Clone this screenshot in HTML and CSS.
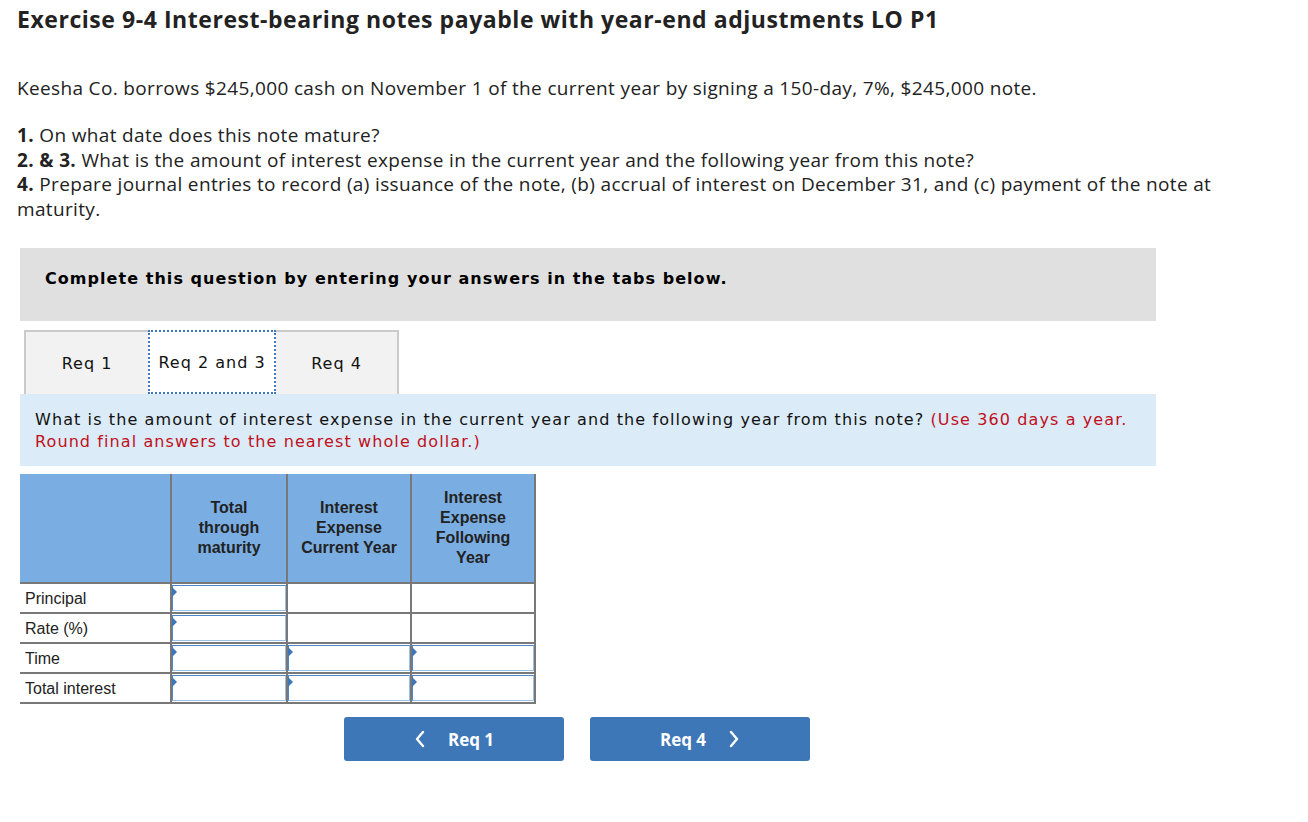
FILE: index.html
```html
<!DOCTYPE html>
<html>
<head>
<meta charset="utf-8">
<link rel="stylesheet" href="styles.css">
</head>
<body>
<div class="page">
  <h1 class="title">Exercise 9-4 Interest-bearing notes payable with year-end adjustments LO P1</h1>
  <p class="intro">Keesha Co. borrows $245,000 cash on November 1 of the current year by signing a 150-day, 7%, $245,000 note.</p>
  <div class="reqs">
    <div><b>1.</b> On what date does this note mature?</div>
    <div><b>2. &amp; 3.</b> What is the amount of interest expense in the current year and the following year from this note?</div>
    <div><b>4.</b> Prepare journal entries to record (a) issuance of the note, (b) accrual of interest on December 31, and (c) payment of the note at maturity.</div>
  </div>

  <div class="instruct">Complete this question by entering your answers in the tabs below.</div>

  <div class="tabs">
    <div class="tab">Req 1</div>
    <div class="tab active">Req 2 and 3</div>
    <div class="tab">Req 4</div>
  </div>

  <div class="question">What is the amount of interest expense in the current year and the following year from this note? <span class="hint">(Use 360 days a year.</span> <span class="hint">Round final answers to the nearest whole dollar.)</span></div>

  <table class="grid">
    <thead>
      <tr>
        <th class="blank"></th>
        <th class="c2">Total<br>through<br>maturity</th>
        <th class="c3">Interest<br>Expense<br>Current Year</th>
        <th class="c4">Interest<br>Expense<br>Following<br>Year</th>
      </tr>
    </thead>
    <tbody>
      <tr>
        <td class="label">Principal</td>
        <td class="in"><div class="box"></div></td>
        <td class="plain"></td>
        <td class="plain"></td>
      </tr>
      <tr>
        <td class="label">Rate (%)</td>
        <td class="in"><div class="box"></div></td>
        <td class="plain"></td>
        <td class="plain"></td>
      </tr>
      <tr>
        <td class="label">Time</td>
        <td class="in"><div class="box"></div></td>
        <td class="in"><div class="box"></div></td>
        <td class="in"><div class="box"></div></td>
      </tr>
      <tr>
        <td class="label">Total interest</td>
        <td class="in"><div class="box"></div></td>
        <td class="in"><div class="box"></div></td>
        <td class="in"><div class="box"></div></td>
      </tr>
    </tbody>
  </table>

  <div class="nav">
    <button class="btn"><svg class="chev" width="12" height="18" viewBox="0 0 12 18"><path d="M9 2 L3 9 L9 16" fill="none" stroke="#fff" stroke-width="2.4" stroke-linecap="round" stroke-linejoin="round"/></svg><span>Req 1</span></button>
    <button class="btn"><span>Req 4</span><svg class="chev" width="12" height="18" viewBox="0 0 12 18"><path d="M3 2 L9 9 L3 16" fill="none" stroke="#fff" stroke-width="2.4" stroke-linecap="round" stroke-linejoin="round"/></svg></button>
  </div>
</div>
</body>
</html>
```

FILE: styles.css
```css
* { box-sizing: border-box; }
body {
  margin: 0;
  background: #fff;
  color: #222;
  font-family: "Open Sans", "Lato", sans-serif;
}
.page {
  padding: 6px 17px 0 17px;
  width: 1308px;
}
.title {
  margin: 0;
  font-size: 23px;
  font-weight: 700;
  letter-spacing: 0.55px;
  line-height: 26px;
  color: #222;
}
.intro {
  margin: 44px 0 0 0;
  font-size: 19px;
  letter-spacing: 0.35px;
  line-height: 24px;
}
.reqs {
  margin-top: 23px;
  font-size: 19px;
  letter-spacing: 0.35px;
  line-height: 24.5px;
  width: 1250px;
}
.reqs b { font-weight: 700; }

.instruct {
  margin: 27px 0 0 3px;
  width: 1136px;
  height: 73px;
  background: #e0e0e0;
  padding: 21px 0 0 25px;
  font-family: "DejaVu Sans", Verdana, sans-serif;
  font-weight: 700;
  font-size: 16px;
  letter-spacing: 1.05px;
  line-height: 20px;
  color: #000;
}

.tabs {
  display: flex;
  margin: 9px 0 0 7px;
  height: 64px;
}
.tab {
  height: 64px;
  background: #f2f2f2;
  border: 2px solid #cacaca;
  border-bottom: none;
  display: flex;
  align-items: center;
  justify-content: center;
  font-family: "DejaVu Sans", Verdana, sans-serif;
  font-size: 16px;
  letter-spacing: 1px;
  color: #111;
}
.tab:nth-child(1) { width: 124px; border-right: none; }
.tab:nth-child(2) { width: 128px; }
.tab:nth-child(3) { width: 123px; border-left: none; }
.tab.active {
  background: #fff;
  border: 2px dotted #3d77b8;
  border-bottom: 2px dotted #3d77b8;
}

.question {
  margin-left: 3px;
  width: 1136px;
  height: 72px;
  background: #dbebf7;
  padding: 15px 15px 0 15px;
  font-family: "DejaVu Sans", Verdana, sans-serif;
  font-size: 16px;
  letter-spacing: 1.1px;
  line-height: 22px;
  color: #111;
}
.hint { color: #c0101c; }

.grid {
  margin: 8px 0 0 3px;
  border-collapse: collapse;
  font-family: "Liberation Sans", Arial, sans-serif;
  font-size: 16px;
}
.grid th {
  background: #7aaee2;
  height: 109px;
  border: 2px solid #787878;
  border-top: none;
  font-weight: 700;
  line-height: 20px;
  color: #222;
  padding: 0 4px 0 4px;
  vertical-align: middle;
}
.grid th.blank { width: 151px; border-left: none; }
.grid th.c2 { width: 116px; }
.grid th.c3 { width: 124px; }
.grid th.c4 { width: 124px; }
.grid td {
  height: 30px;
  padding: 0;
  border: 2px solid #787878;
}
.grid td.label {
  border-left: none;
  border-top: none;
  padding: 2px 0 0 5px;
  color: #222;
}
.grid td.plain { background: #fff; }
.grid td.in { padding: 0; }
.box {
  position: relative;
  height: 26px;
  border: 1px solid #4f86c6;
  border-bottom-color: #9cc0e6;
  border-right-color: #9cc0e6;
  background: #fff;
}
.box::before {
  content: "";
  position: absolute;
  left: -1px;
  top: 1px;
  border-left: 5px solid #3d77b8;
  border-top: 5px solid transparent;
  border-bottom: 5px solid transparent;
}

.nav {
  display: flex;
  gap: 26px;
  margin: 13px 0 0 327px;
}
.btn {
  width: 220px;
  height: 44px;
  background: #3d77b8;
  border: none;
  border-radius: 3px;
  color: #fff;
  font-family: "Open Sans", "Lato", sans-serif;
  font-size: 17px;
  font-weight: 700;
  display: flex;
  align-items: center;
  justify-content: center;
  gap: 22px;
  padding: 0;
}
.chev { display: block; }
```
